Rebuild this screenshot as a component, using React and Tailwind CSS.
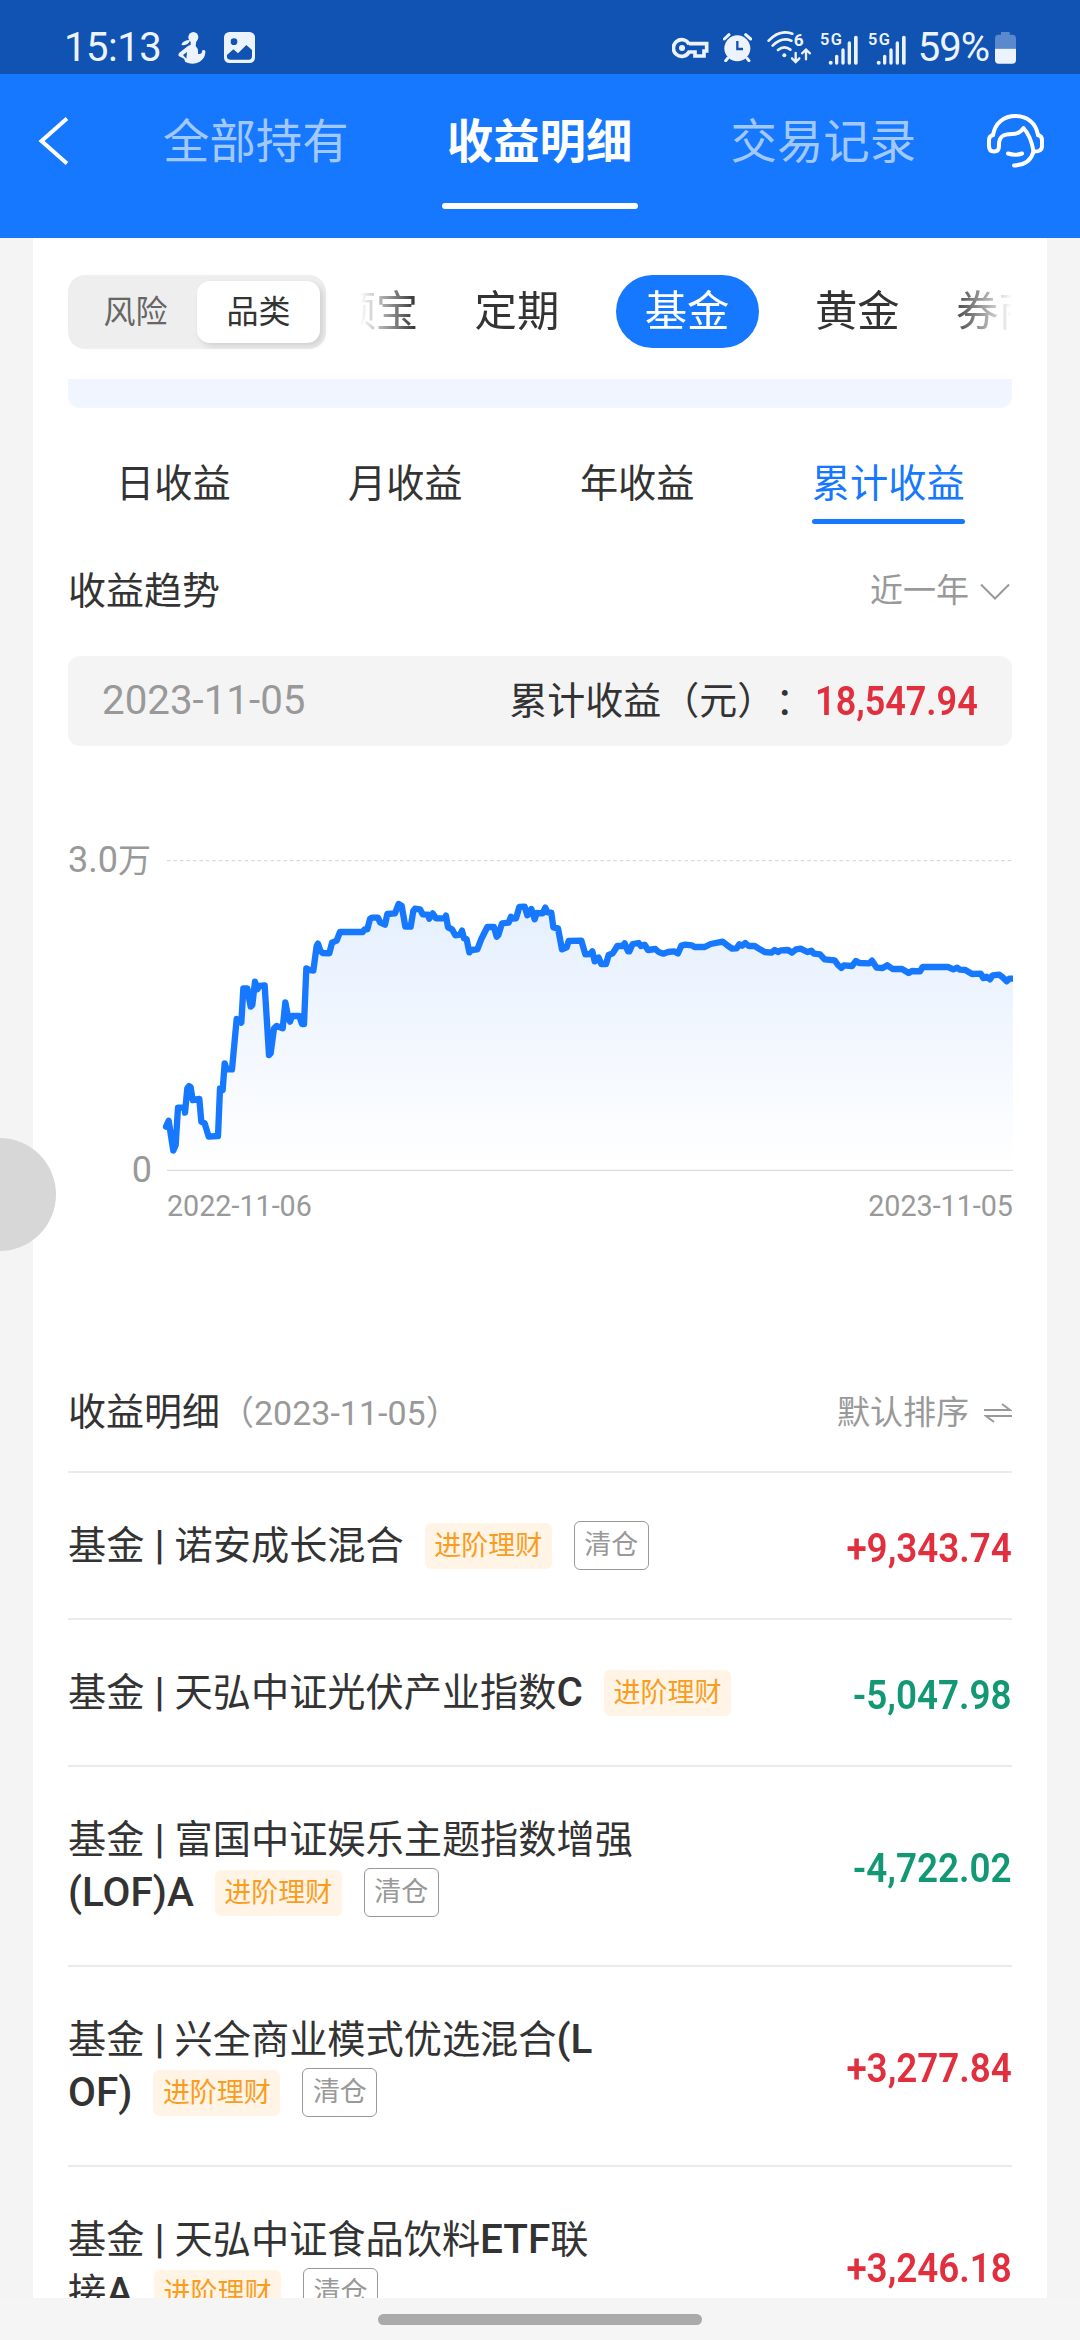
import React, { useState } from "react";

const CHART_POINTS =
  "78,860 86,842 100,932 107,915 114,803 134,803 135,818 142,745 147,738 152,742 158,780 178,777 184,845 194,850 206,890 234,888 240,745 248,750 254,670 260,688 276,688 290,537 304,548 310,445 322,445 332,500 337,495 345,425 352,448 358,438 374,436 387,645 392,640 402,565 410,558 428,565 436,487 444,530 450,545 456,528 478,528 486,552 492,552 499,385 508,390 520,392 530,318 534,311 541,332 548,339 568,340 576,308 590,302 600,276 668,276 674,268 682,268 690,237 696,233 714,233 720,247 735,254 742,222 765,220 776,192 785,197 796,260 812,260 820,212 825,206 840,208 848,223 864,224 868,236 878,220 888,235 914,235 918,227 924,262 936,268 946,286 960,284 966,272 972,295 980,298 988,337 994,330 1012,328 1024,297 1042,261 1062,261 1070,290 1075,285 1086,250 1106,248 1113,230 1118,236 1128,235 1138,201 1154,200 1162,226 1174,207 1184,238 1190,219 1208,220 1216,203 1222,217 1234,218 1240,262 1254,265 1266,328 1280,322 1286,303 1324,302 1336,343 1350,342 1357,334 1364,364 1376,353 1384,372 1398,372 1406,345 1418,340 1432,318 1448,318 1454,310 1464,334 1468,334 1478,312 1496,309 1503,318 1514,314 1524,330 1546,327 1556,336 1570,341 1584,336 1602,334 1614,340 1624,317 1636,314 1656,316 1664,321 1694,321 1712,312 1748,305 1762,316 1776,326 1790,325 1798,313 1806,317 1816,309 1826,318 1844,318 1860,328 1874,336 1894,338 1904,330 1914,336 1922,331 1944,330 1956,338 1968,328 1982,326 2002,336 2014,332 2022,341 2040,343 2054,358 2084,361 2094,375 2104,384 2112,376 2136,378 2148,363 2158,369 2188,370 2196,362 2210,383 2228,384 2242,376 2258,387 2286,387 2306,399 2316,393 2340,394 2348,381 2424,381 2440,388 2452,383 2460,389 2476,390 2496,402 2522,401 2530,414 2540,410 2550,418 2558,406 2578,404 2588,412 2600,424 2608,416 2619,416";

const headerTabs = ["全部持有", "收益明细", "交易记录"];
const categories = ["余额宝", "定期", "基金", "黄金", "券商"];
const periods = ["日收益", "月收益", "年收益", "累计收益"];

const funds = [
  { lines: ["基金 | 诺安成长混合"], cleared: true, amount: "+9,343.74" },
  { lines: ["基金 | 天弘中证光伏产业指数C"], cleared: false, amount: "-5,047.98" },
  { lines: ["基金 | 富国中证娱乐主题指数增强", "(LOF)A"], cleared: true, amount: "-4,722.02" },
  { lines: ["基金 | 兴全商业模式优选混合(L", "OF)"], cleared: true, amount: "+3,277.84" },
  { lines: ["基金 | 天弘中证食品饮料ETF联", "接A"], cleared: true, amount: "+3,246.18" },
];

const Signal = () => (
  <svg className="h-[34px] w-[39px]" viewBox="0 0 117 102" fill="#ecf3fd">
    <text x="0" y="42" fontSize="49" fontWeight="600" fontFamily="Roboto" textLength="66">
      5G
    </text>
    <circle cx="32" cy="95" r="6" />
    <rect x="45" y="71" width="10" height="30" rx="5" />
    <rect x="64" y="52" width="10" height="49" rx="5" />
    <rect x="83" y="31" width="10" height="70" rx="5" />
    <rect x="102" y="14" width="11" height="87" rx="5" />
  </svg>
);

const StatusBar = () => (
  <div className="flex h-[74px] shrink-0 items-center bg-[#1153b2] pl-[64px] pr-[64px] pt-[21px] text-[40px] leading-none text-[#ecf3fd]">
    <span className="tracking-[-0.5px]">15:13</span>
    <svg className="ml-[17px] h-[32px] w-[28px]" viewBox="0 0 84 96" fill="#ecf3fd">
      <ellipse cx="46" cy="16" rx="15" ry="16" />
      <path d="M38 26h17l-2 16Q62 50 60 66Q72 68 72 58L74 54Q84 52 82 62Q80 80 64 90Q44 100 22 90L18 80L2 72Q0 66 4 62L30 42L38 38Z" />
      <path d="M10 38Q16 24 36 24L34 30Q26 40 14 40Z" />
      <path d="M15 69L27 60L25 80Z" fill="#1153b2" />
    </svg>
    <svg className="ml-[18px] h-[31px] w-[31px]" viewBox="0 0 93 93">
      <rect width="93" height="93" rx="16" fill="#ecf3fd" />
      <circle cx="30" cy="29" r="10" fill="#1153b2" />
      <path d="M9 69L28 52L42 64L67 39L84 54V72Q84 83 74 83H20Q9 83 9 74Z" fill="#1153b2" />
    </svg>
    <svg className="ml-auto h-[22px] w-[37px]" viewBox="0 0 111 66" fill="none" stroke="#ecf3fd" strokeWidth="11">
      <path d="M51 21A25 25 0 1 0 51 45H69V57H96V42H104V20H51Z" />
      <circle cx="30" cy="33" r="9" fill="#ecf3fd" stroke="none" />
    </svg>
    <svg className="ml-[14px] h-[29px] w-[29px]" viewBox="0 0 87 87">
      <circle cx="43" cy="46" r="39" fill="#ecf3fd" />
      <path d="M4 18L18 5M68 5L83 18M14 76L8 83M72 76L78 83" stroke="#ecf3fd" strokeWidth="9" strokeLinecap="round" />
      <path d="M43 24V48H60" fill="none" stroke="#1153b2" strokeWidth="7" />
    </svg>
    <svg className="ml-[15px] h-[33px] w-[45px]" viewBox="0 0 135 99" fill="none" stroke="#ecf3fd" strokeWidth="8" strokeLinecap="round">
      <path d="M5 29Q38 -6 76 8M17 44Q44 17 73 29M33 57Q52 42 70 56" />
      <circle cx="52" cy="73" r="6" fill="#ecf3fd" stroke="none" />
      <path d="M86 66V92M75 82L86 93L97 82M117 85V58M105 67L117 56L129 67" strokeWidth="7" />
      <text x="80" y="44" fontSize="52" fontWeight="700" fontFamily="Roboto" fill="#ecf3fd" stroke="none">
        6
      </text>
    </svg>
    <div className="ml-[8px] flex gap-[9px]">
      <Signal />
      <Signal />
    </div>
    <span className="ml-[11px] tracking-[-1px]">59%</span>
    <svg className="ml-[6px] h-[32px] w-[21px]" viewBox="0 0 63 96">
      <path d="M18 0H44V8H52Q63 8 63 20V50H0V20Q0 8 10 8H18Z" fill="#5b8acc" />
      <path d="M0 50H63V84Q63 95 52 95H11Q0 95 0 84Z" fill="#ecf3fd" />
    </svg>
  </div>
);

const Header = () => (
  <header className="flex h-[164px] shrink-0 items-start bg-[#1677ff] pl-[38px] pr-[36px] pt-[40px]">
    <svg className="mt-[3px] h-[48px] w-[30px]" viewBox="0 0 30 48" fill="none" stroke="#fff" strokeWidth="4">
      <path d="M29 1.5L3.5 24L29 46.5" />
    </svg>
    <div className="ml-[95px] flex flex-1 gap-[93px]">
      {headerTabs.map((tab) => (
        <div key={tab} className="flex shrink-0 flex-col items-center">
          <span
            className={`text-[46.4px] leading-[56px] ${
              tab === "收益明细" ? "font-bold text-white" : "text-[#a2c9ff]"
            }`}
          >
            {tab}
          </span>
          {tab === "收益明细" && <div className="mt-[33px] h-[6px] w-[196px] rounded-full bg-white"></div>}
        </div>
      ))}
    </div>
    <svg className="h-[54px] w-[57px]" viewBox="0 0 57 54" fill="none" stroke="#fff" strokeWidth="4" strokeLinecap="round" strokeLinejoin="round">
      <path d="M6 21C8 9 17 2 28.5 2S49 9 51 21" />
      <path d="M6 21Q2 22 2 26V32Q2 37.5 7 37.5T12 32C11.5 22 17 20 25 20Q33 20 36.5 14Q44 22 46.5 37.5Q55 38 55 32V26Q55 22 51 21" />
      <path d="M46.5 37.5Q43 51 27 51.5M21 39.5Q28 42 35 39.5" />
    </svg>
  </header>
);

const FilterRow = () => (
  <div className="flex h-[74px] shrink-0 items-start">
    <div className="flex h-[74px] w-[258px] shrink-0 items-center rounded-[17px] bg-[#eeeeee] p-[6px] text-[32px] leading-[62px]">
      <div className="w-[123px] text-center text-[#666]">风险</div>
      <div className="h-[62px] w-[123px] rounded-[13px] bg-white text-center text-[#333] shadow-[3px_3px_6px_rgba(0,0,0,0.13)]">
        品类
      </div>
    </div>
    <div className="ml-[34px] flex flex-1 justify-start overflow-hidden [mask-image:linear-gradient(to_right,transparent,black_56px,black_590px,transparent)]">
      <div className="-ml-[69px] flex shrink-0 items-start gap-[56.4px] text-[42.4px] leading-[73px] text-[#333]">
        {categories.map((name) => (
          <span
            key={name}
            className={name === "基金" ? "h-[73px] rounded-full bg-[#1677ff] px-[29px] text-white" : ""}
          >
            {name}
          </span>
        ))}
      </div>
    </div>
  </div>
);

const TrendChart = () => (
  <div className="mt-[91px] flex h-[389px] shrink-0 text-[#999]">
    <div className="flex w-[84px] shrink-0 flex-col justify-between pb-[33px] text-right text-[36px] leading-[46px]">
      <span className="text-left whitespace-nowrap">
        3.0<span className="text-[33px]">万</span>
      </span>
      <span>0</span>
    </div>
    <div className="ml-[8px] mt-[23px] w-[853px] shrink-0">
      <svg className="h-[313px] w-[853px]" viewBox="60 60 2559 939" fill="none">
        <defs>
          <linearGradient id="area" gradientUnits="userSpaceOnUse" x1="0" y1="190" x2="0" y2="990">
            <stop offset="0" stopColor="#e5effe" />
            <stop offset="1" stopColor="#ffffff" />
          </linearGradient>
        </defs>
        <path d="M81 62H2619" stroke="#d4d4d4" strokeWidth="3" strokeDasharray="11 8.4" />
        <polygon points={`81,990 ${CHART_POINTS} 2619,990`} fill="url(#area)" />
        <path d="M81 991H2619" stroke="#dcdcdc" strokeWidth="4" />
        <polyline points={CHART_POINTS} stroke="#1677ff" strokeWidth="19" strokeLinejoin="round" strokeLinecap="round" />
      </svg>
      <div className="mt-[13px] flex justify-between pl-[7px] text-[28.7px] leading-[40px]">
        <span>2022-11-06</span>
        <span>2023-11-05</span>
      </div>
    </div>
  </div>
);

// latin runs are set a step heavier than the Chinese text around them
const FundName = ({ text }) =>
  text.split(/([ -~]+)/).map((part, i) => (
    <span key={i} className={i % 2 ? "text-[40.5px] font-medium" : ""}>
      {part}
    </span>
  ));

const FundRow = ({ fund }) => {
  const twoLines = fund.lines.length > 1;
  const lastLine = fund.lines.length - 1;

  return (
    <div
      className={`flex shrink-0 items-center justify-between border-t-2 border-[#ebebeb] ${
        twoLines ? "h-[200px]" : "h-[147px]"
      }`}
    >
      <div className="text-[38.2px] text-[#333]">
        {fund.lines.map((line, i) => (
          <div key={line} className="flex h-[53px] items-center leading-[53px] whitespace-pre">
            <div>
              <FundName text={line} />
            </div>
            {i === lastLine && (
              <>
                <span className="ml-[21px] h-[46px] w-[127px] rounded-md bg-[#fff4e6] text-center text-[27px] leading-[46px] text-[#fa9d1e]">
                  进阶理财
                </span>
                {fund.cleared && (
                  <span className="ml-[22px] h-[49px] w-[75px] rounded-md border-[1.5px] border-[#999] text-center text-[27px] leading-[46px] text-[#999]">
                    清仓
                  </span>
                )}
              </>
            )}
          </div>
        ))}
      </div>
      <span
        className={`origin-right scale-x-[0.92] pt-1.5 text-[40px] font-semibold ${
          fund.amount.startsWith("+") ? "text-[#e12f3e]" : "text-[#129874]"
        }`}
      >
        {fund.amount}
      </span>
    </div>
  );
};

const App = () => {
  const [period, setPeriod] = useState("累计收益");

  return (
    <div className="relative flex h-[2340px] w-[1080px] flex-col overflow-hidden bg-[#f4f4f4] font-['Roboto','Noto_Sans_CJK_SC',sans-serif]">
      <StatusBar />
      <Header />
      <main className="mx-[33px] flex h-[2060px] shrink-0 flex-col overflow-hidden bg-white px-[35px] pt-[37px]">
        <FilterRow />
        <div className="mt-[30px] h-[29px] shrink-0 rounded-b-xl bg-[#f1f5ff]"></div>

        <div className="mt-[47px] flex h-[70px] shrink-0 gap-[117.4px] pl-[48px] text-[38.2px] leading-[58px]">
          {periods.map((name) => (
            <button key={name} onClick={() => setPeriod(name)} className="flex h-[69px] flex-col justify-between">
              <span className={name === period ? "text-[#1677ff]" : "text-[#333]"}>{name}</span>
              {name === period && <div className="h-[5px] w-full rounded-sm bg-[#1677ff]"></div>}
            </button>
          ))}
        </div>

        <div className="mt-[38px] flex h-[56px] shrink-0 items-center justify-between">
          <span className="text-[38px] text-[#333]">收益趋势</span>
          <div className="flex items-center gap-[11px] pr-[2px] text-[33px] text-[#999]">
            近一年
            <svg className="h-[17px] w-[30px]" viewBox="0 0 30 17" fill="none" stroke="#999" strokeWidth="2">
              <path d="M1 1.5L15 15.5L29 1.5" />
            </svg>
          </div>
        </div>

        <div className="mt-[37px] flex h-[90px] shrink-0 items-center rounded-xl bg-[#f4f4f4] pl-[34px] pr-[34px]">
          <span className="text-[40.3px] text-[#999]">2023-11-05</span>
          <span className="ml-auto text-[38px] text-[#333] [text-spacing-trim:space-all]">累计收益（元）：</span>
          <span className="-ml-[16px] origin-right scale-x-[0.9] pt-0.5 text-[40px] font-semibold text-[#e12f3e]">
            18,547.94
          </span>
        </div>

        <TrendChart />

        <div className="mt-[127px] flex h-[118px] shrink-0 items-center justify-between">
          <div className="text-[38px] text-[#333]">
            收益明细<span className="text-[34px] text-[#999]">（2023-11-05）</span>
          </div>
          <div className="flex items-center gap-[15px] pt-0.5 text-[33px] text-[#999]">
            默认排序
            <svg className="h-[20px] w-[28px]" viewBox="0 0 28 20" fill="none" stroke="#999" strokeWidth="2">
              <path d="M0 7H26L18 1M28 13H2L10 19" />
            </svg>
          </div>
        </div>

        {funds.map((fund) => (
          <FundRow key={fund.amount} fund={fund} />
        ))}
      </main>
      <div className="flex flex-1 items-start justify-center bg-[#f5f5f5] pt-[16px]">
        <div className="h-[11px] w-[324px] rounded-full bg-[#aaaaaa]"></div>
      </div>

      {/* floating assistive button, half off screen */}
      <div className="absolute -left-[57px] top-[1138px] h-[113px] w-[113px] rounded-full bg-[#d7d7d7]"></div>
    </div>
  );
};

export default App;
